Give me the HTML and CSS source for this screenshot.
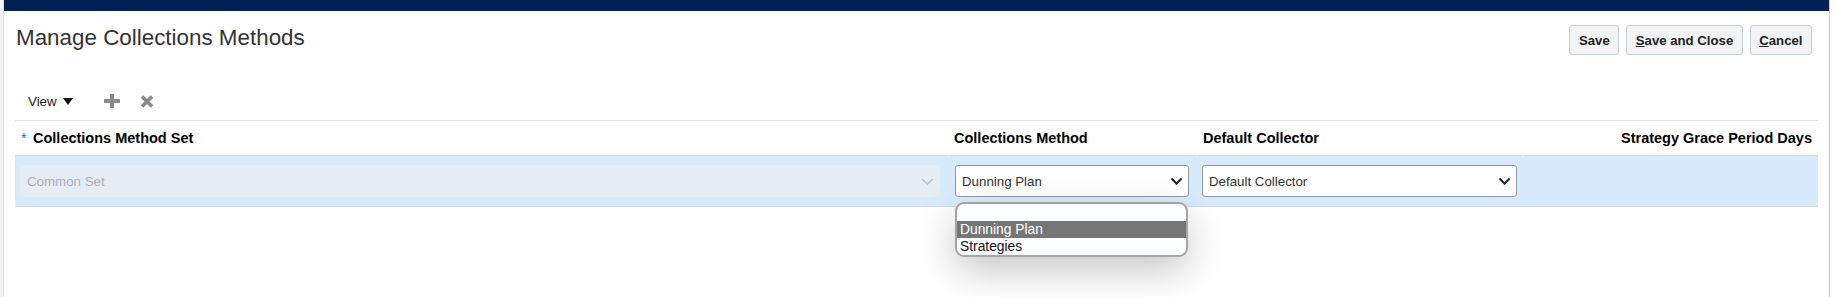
FILE: index.html
```html
<!DOCTYPE html>
<html lang="en">

<head>
  <meta charset="UTF-8">
  <title>Manage Collections Methods</title>
  <link rel="stylesheet" href="styles.css">
</head>

<body>
  <div class="shell">
    <div class="gutter"></div>
    <main class="page">
      <div class="topbar"></div>
      <div class="page-body">
        <header class="title-row">
          <h1 class="title">Manage Collections Methods</h1>
          <div class="actions">
            <button class="btn">Save</button>
            <button class="btn"><u>S</u>ave and Close</button>
            <button class="btn"><u>C</u>ancel</button>
          </div>
        </header>

        <div class="toolbar">
          <span class="view-menu">View
            <svg class="caret" width="10" height="7" viewBox="0 0 10 7"><path d="M0 0h10L5 7z" fill="#111" /></svg>
          </span>
          <span class="tool-icon">
            <svg width="16" height="14" viewBox="0 0 16 14"><path d="M6 0h4v5h6v4h-6v5H6V9H0V5h6z" fill="#8a8a8a" /></svg>
          </span>
          <span class="tool-icon">
            <svg width="14" height="13" viewBox="0 0 14 13"><path d="M2 1.5l10 10M12 1.5l-10 10" stroke="#8a8a8a" stroke-width="3.6" /></svg>
          </span>
        </div>

        <div class="grid">
          <div class="grid-head">
            <div class="th"><span class="req">*</span>Collections Method Set</div>
            <div class="th">Collections Method</div>
            <div class="th">Default Collector</div>
            <div class="th th-right">Strategy Grace Period Days</div>
          </div>
          <div class="grid-row">
            <div class="td">
              <div class="field field-readonly field-set">
                <span>Common Set</span>
                <svg class="chev" width="13" height="7" viewBox="0 0 13 7"><path d="M1 1l5.5 5 5.5-5" fill="none" stroke="#b9c0c7" stroke-width="1.5" /></svg>
              </div>
            </div>
            <div class="td td-method">
              <div class="field field-method">
                <span>Dunning Plan</span>
                <svg class="chev" width="13" height="8" viewBox="0 0 13 8"><path d="M1.5 1.5l5 5 5-5" fill="none" stroke="#222" stroke-width="2" /></svg>
              </div>
              <ul class="listbox">
                <li class="option"></li>
                <li class="option selected">Dunning Plan</li>
                <li class="option">Strategies</li>
              </ul>
            </div>
            <div class="td td-collector">
              <div class="field field-collector">
                <span>Default Collector</span>
                <svg class="chev" width="13" height="8" viewBox="0 0 13 8"><path d="M1.5 1.5l5 5 5-5" fill="none" stroke="#222" stroke-width="2" /></svg>
              </div>
            </div>
            <div class="td"></div>
          </div>
        </div>
      </div>
    </main>
  </div>
</body>

</html>
```

FILE: styles.css
```css
* {
  margin: 0;
  padding: 0;
  box-sizing: border-box;
}

body {
  width: 100%;
  height: 100vh;
  overflow: hidden;
  background: #fff;
  font-family: "Liberation Sans", Arial, sans-serif;
  color: #333;
}

.shell {
  display: flex;
  height: 100%;
}

.gutter {
  width: 4px;
  background: #f4f4f4;
  border-right: 1px solid #dedede;
}

.page {
  width: 1826px;
  border-right: 1px solid #c9c9c9;
}

.topbar {
  height: 11px;
  background: #022153;
}

.page-body {
  padding: 0 11px 0 11px;
}

.title-row {
  display: flex;
  justify-content: space-between;
  align-items: flex-start;
  margin-top: 14px;
}

.title {
  font-size: 22.4px;
  font-weight: normal;
  line-height: 26px;
  color: #333;
  padding-left: 1px;
}

.actions {
  display: flex;
  gap: 7px;
  margin-right: 6px;
}

.btn {
  height: 30px;
  padding: 0 8.5px;
  font-family: inherit;
  font-size: 13.2px;
  font-weight: bold;
  color: #222;
  background: #f1f3f4;
  border: 1px solid #c6ced5;
  border-radius: 3px;
}

.toolbar {
  display: flex;
  align-items: center;
  height: 28px;
  margin-top: 32px;
  padding-left: 13px;
}

.view-menu {
  display: flex;
  align-items: center;
  gap: 6px;
  font-size: 13.3px;
  color: #222;
}

.tool-icon {
  display: flex;
  margin-left: 31px;
}

.tool-icon + .tool-icon {
  margin-left: 20px;
}

.grid {
  width: 1803px;
  margin-top: 5px;
  border-top: 1px solid #dfe4e9;
}

.grid-head,
.grid-row {
  display: grid;
  grid-template-columns: 934px 248px 326px 295px;
}

.th {
  height: 35px;
  display: flex;
  align-items: center;
  padding-left: 5px;
  border-bottom: 1px solid #d4dce3;
  margin-right: 1px;
  font-size: 14.5px;
  font-weight: bold;
  color: #000;
}

.th:first-child {
  padding-left: 6px;
}

.th:nth-child(3) {
  padding-left: 6px;
}

.th-right {
  justify-content: flex-end;
  padding-right: 6px;
  margin-right: 0;
}

.req {
  display: inline-block;
  width: 12px;
  font-weight: normal;
  color: #2c6cb0;
}

.grid-row {
  background: #d8ebfc;
  border-bottom: 1px solid #d3dbe2;
  height: 51px;
}

.td {
  position: relative;
  padding-top: 9px;
}

.field {
  height: 32px;
  display: flex;
  align-items: center;
  justify-content: space-between;
  padding: 0 5px 0 6px;
  border-radius: 3px;
  font-size: 13.3px;
  color: #333;
  background: #fff;
  border: 1px solid #8d9aa6;
}

.field-readonly {
  background: #e6ecf4;
  border-color: #e6ecf4;
  color: #a9b0b8;
}

.field-set {
  margin-left: 5px;
  width: 920px;
}

.field-method {
  margin-left: 6px;
  width: 234px;
}

.field-collector {
  margin-left: 5px;
  width: 315px;
}

.listbox {
  position: absolute;
  left: 6px;
  top: 46px;
  width: 233px;
  list-style: none;
  background: #fcfdff;
  border: 2px solid #a5a5a5;
  border-radius: 9px;
  overflow: hidden;
  box-shadow: 0 14px 38px rgba(0, 0, 0, 0.22);
  z-index: 2;
}

.option {
  height: 17px;
  line-height: 17px;
  padding-left: 3px;
  font-size: 13.8px;
  color: #111;
}

.option.selected {
  background: #767676;
  color: #fff;
}
```
